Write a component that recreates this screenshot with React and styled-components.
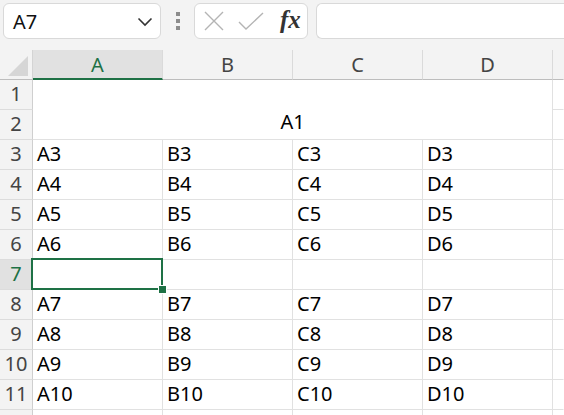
import React from "react";
import styled, { createGlobalStyle } from "styled-components";

const GlobalStyle = createGlobalStyle`
    body {
        margin: 0;
        background: #ffffff;
        font-family: "Noto Sans", "Open Sans", sans-serif;
        overflow: hidden;
    }
`;

const GREEN = "#1e7145";
const COLS = ["A", "B", "C", "D"];

// rows below the merged A1:D2 block; null = the empty row 7
const ROWS = [
    { n: 3, v: "3" },
    { n: 4, v: "4" },
    { n: 5, v: "5" },
    { n: 6, v: "6" },
    { n: 7, v: null },
    { n: 8, v: "7" },
    { n: 9, v: "8" },
    { n: 10, v: "9" },
    { n: 11, v: "10" },
    { n: "", v: "" }, // row 12, only its top edge shows
];

function App() {
    return (
        <>
            <GlobalStyle />
            <Toolbar>
                <NameBox>
                    <span>A7</span>
                    <svg width="16" height="10" viewBox="0 0 16 10">
                        <polyline
                            points="1.5,1.5 8,8 14.5,1.5"
                            fill="none"
                            stroke="#333"
                            strokeWidth="1.6"
                        />
                    </svg>
                </NameBox>
                <Dots>
                    <i />
                    <i />
                    <i />
                </Dots>
                <FormulaButtons>
                    <svg width="20" height="20" viewBox="0 0 20 20">
                        <path
                            d="M1 1 L19 19 M19 1 L1 19"
                            stroke="#b4b4b4"
                            strokeWidth="1.4"
                        />
                    </svg>
                    <svg width="26" height="20" viewBox="0 0 26 20">
                        <polyline
                            points="1,11 8,18 25,2"
                            fill="none"
                            stroke="#b4b4b4"
                            strokeWidth="1.4"
                        />
                    </svg>
                    <Fx>fx</Fx>
                </FormulaButtons>
                <FormulaInput />
            </Toolbar>
            <Sheet>
                <Corner>
                    <svg width="20" height="20" viewBox="0 0 20 20">
                        <polygon points="20,0 20,20 0,20" fill="#d6d6d6" />
                    </svg>
                </Corner>
                {COLS.map((c) => (
                    <ColHead key={c} $active={c === "A"}>
                        {c}
                    </ColHead>
                ))}
                <ColHead $blank />

                <RowHead>1</RowHead>
                <Merged>A1</Merged>
                <Cell $tail />
                <RowHead>2</RowHead>
                <Cell $tail />

                {ROWS.map(({ n, v }, r) => (
                    <React.Fragment key={r}>
                        <RowHead $active={v === null}>{n}</RowHead>
                        {COLS.map((c, i) => (
                            <Cell key={c} $selected={v === null && i === 0}>
                                {v ? c + v : ""}
                            </Cell>
                        ))}
                        <Cell $tail />
                    </React.Fragment>
                ))}
            </Sheet>
        </>
    );
}

export default App;

const Toolbar = styled.div`
    height: 50px;
    box-sizing: border-box;
    padding: 3px 0 0 3px;
    background: #f3f3f3;
    display: flex;
    align-items: flex-start;
`;

const Box = styled.div`
    height: 36px;
    box-sizing: border-box;
    background: #ffffff;
    border: 1px solid #d9d9d9;
    border-radius: 6px;
`;

const NameBox = styled(Box)`
    width: 158px;
    display: flex;
    align-items: center;
    justify-content: space-between;
    padding: 0 7px 0 9px;
    font-size: 20px;
    color: #111;
    svg {
        margin-top: 2px;
    }
`;

const Dots = styled.div`
    width: 33px;
    height: 36px;
    display: flex;
    flex-direction: column;
    align-items: center;
    justify-content: center;
    gap: 3px;
    i {
        width: 4px;
        height: 4px;
        background: #8c8c8c;
    }
`;

const FormulaButtons = styled(Box)`
    width: 114px;
    display: flex;
    align-items: center;
    padding: 0 0 0 9px;
    gap: 14px;
`;

const Fx = styled.span`
    font-family: "Liberation Serif", "DejaVu Serif", serif;
    font-style: italic;
    font-weight: bold;
    font-size: 25px;
    color: #333;
    line-height: 1;
    margin-left: 2px;
    margin-top: -3px;
`;

const FormulaInput = styled(Box)`
    flex: 1;
    margin-left: 8px;
    border-right: none;
    border-top-right-radius: 0;
    border-bottom-right-radius: 0;
`;

const Sheet = styled.div`
    display: grid;
    grid-template-columns: 33px repeat(4, 130px) 1fr;
    grid-auto-rows: 30px;
    font-size: 20px;
    color: #000;
`;

const Corner = styled.div`
    background: #f3f3f3;
    border-right: 1px solid #d4d4d4;
    border-bottom: 1px solid #bdbdbd;
    box-sizing: border-box;
    padding: 6px 0 0 8px;
    svg {
        display: block;
    }
`;

const ColHead = styled.div`
    box-sizing: border-box;
    background: ${(p) => (p.$active ? "#e1e1e1" : "#f3f3f3")};
    color: ${(p) => (p.$active ? GREEN : "#444")};
    border-right: 1px solid ${(p) => (p.$blank ? "transparent" : "#dadada")};
    border-bottom: ${(p) =>
        p.$active ? `2px solid ${GREEN}` : "1px solid #bdbdbd"};
    display: flex;
    align-items: center;
    justify-content: center;
    line-height: 1;
    padding-top: 1px;
`;

const RowHead = styled.div`
    box-sizing: border-box;
    background: ${(p) => (p.$active ? "#e1e1e1" : "#f3f3f3")};
    color: ${(p) => (p.$active ? GREEN : "#444")};
    border-right: 1px solid #cfcfcf;
    border-bottom: 1px solid #dcdcdc;
    display: flex;
    align-items: flex-end;
    justify-content: center;
    line-height: 1;
    padding-bottom: 5px;
`;

const Cell = styled.div`
    position: relative;
    box-sizing: border-box;
    border-right: 1px solid ${(p) => (p.$tail ? "transparent" : "#e1e1e1")};
    border-bottom: 1px solid #e1e1e1;
    display: flex;
    align-items: flex-end;
    padding: 0 0 5px 4px;
    line-height: 1;
    white-space: nowrap;
    ${(p) =>
        p.$selected &&
        `
        &::before {
            content: "";
            position: absolute;
            left: -2px;
            top: -2px;
            right: -1px;
            bottom: -1px;
            border: 2px solid ${GREEN};
        }
        &::after {
            content: "";
            position: absolute;
            right: -5px;
            bottom: -5px;
            width: 7px;
            height: 7px;
            background: ${GREEN};
            border: 1px solid #fff;
            z-index: 1;
        }
    `}
`;

const Merged = styled(Cell)`
    grid-column: 2 / 6;
    grid-row: 2 / 4;
    justify-content: center;
    padding: 0 0 7px 0;
`;
